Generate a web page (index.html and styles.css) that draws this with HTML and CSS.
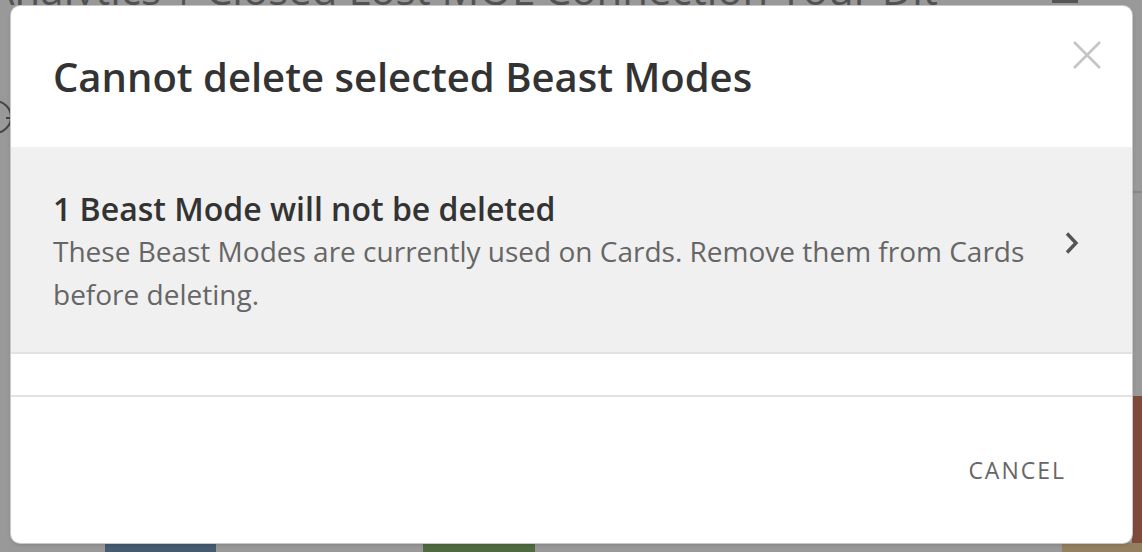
FILE: index.html
```html
<!DOCTYPE html>
<html lang="en">
<head>
    <meta charset="UTF-8">
    <meta name="viewport" content="width=device-width, initial-scale=1.0">
    <title>Beast Modes</title>
    <link rel="stylesheet" href="styles.css">
</head>
<body>
    <!-- Page behind the dialog -->
    <div class="page">
        <div class="page-title">Analytics | Closed Lost MQL Connection Your Dit</div>
        <div class="page-tool"></div>
        <div class="page-circle"><span></span></div>
        <div class="page-line"></div>
        <div class="bar bar-blue"></div>
        <div class="bar bar-green"></div>
        <div class="bar bar-brown"></div>
        <div class="bar bar-tan"></div>
    </div>

    <!-- Dialog -->
    <div class="modal">
        <header class="modal-header">
            <h1>Cannot delete selected Beast Modes</h1>
            <button class="close" aria-label="Close">
                <svg width="30" height="30" viewBox="0 0 30 30">
                    <path d="M2 2 L28 28 M28 2 L2 28" stroke="#c4c4c4" stroke-width="2.6" fill="none"/>
                </svg>
            </button>
        </header>
        <section class="warning">
            <div class="warning-text">
                <h2>1 Beast Mode will not be deleted</h2>
                <p>These Beast Modes are currently used on Cards. Remove them from Cards before deleting.</p>
            </div>
            <svg class="chevron" width="16" height="24" viewBox="0 0 16 24">
                <path d="M3 2.5 L12 12 L3 21.5" stroke="#555" stroke-width="3.4" fill="none"/>
            </svg>
        </section>
        <div class="spacer"></div>
        <footer class="modal-footer">
            <button class="cancel">Cancel</button>
        </footer>
    </div>
</body>
</html>
```

FILE: styles.css
```css
body {
    margin: 0;
    padding: 0;
    width: 1142px;
    height: 552px;
    overflow: hidden;
    background-color: #999999;
    font-family: "Open Sans", "Noto Sans", sans-serif;
    color: #333;
}

.page {
    position: relative;
    width: 1142px;
    height: 552px;
}

.page-title {
    position: absolute;
    left: -12px;
    top: -40px;
    font-size: 42px;
    line-height: 57px;
    color: #525252;
    white-space: nowrap;
}

.page-tool {
    position: absolute;
    left: 1052px;
    top: 0;
    width: 26px;
    height: 3px;
    background: #555;
}

.page-circle {
    position: absolute;
    left: -22px;
    top: 100px;
    width: 30px;
    height: 30px;
    border: 2px solid #444;
    border-radius: 50%;
}

.page-circle span {
    position: absolute;
    left: 26px;
    top: 15px;
    width: 8px;
    height: 2px;
    background: #444;
}

.page-line {
    position: absolute;
    left: 1132px;
    top: 191px;
    width: 10px;
    height: 2px;
    background: #888;
}

.bar {
    position: absolute;
}

.bar-blue {
    left: 105px;
    top: 540px;
    width: 111px;
    height: 12px;
    background: #465a70;
}

.bar-green {
    left: 423px;
    top: 540px;
    width: 112px;
    height: 12px;
    background: #4f6a40;
}

.bar-brown {
    left: 1132px;
    top: 396px;
    width: 10px;
    height: 156px;
    background: #804a3a;
}

.bar-tan {
    left: 1062px;
    top: 543px;
    width: 80px;
    height: 9px;
    background: #948060;
}

.modal {
    position: absolute;
    left: 11px;
    top: 6px;
    width: 1121px;
    height: 537px;
    background: #fff;
    border-radius: 9px;
    box-shadow: 0 0 0 1px #c8c8c8, 0 2px 4px rgba(0, 0, 0, 0.15);
    overflow: hidden;
    display: flex;
    flex-direction: column;
}

.modal-header {
    height: 141px;
    flex-shrink: 0;
    padding: 0 42px;
    display: flex;
    align-items: center;
    justify-content: space-between;
}

h1 {
    margin: 0;
    font-size: 40px;
    font-weight: 600;
    color: #333;
}

.close {
    background: none;
    border: none;
    padding: 0;
    margin-right: -12px;
    margin-top: -40px;
    cursor: pointer;
}

.warning {
    height: 207px;
    flex-shrink: 0;
    box-sizing: border-box;
    background: #f0f0f0;
    border-bottom: 2px solid #e2e2e2;
    padding: 41px 52px 0 42px;
    display: flex;
    align-items: flex-start;
    gap: 28px;
}

.warning-text {
    flex: 1;
}

h2 {
    margin: 0;
    font-size: 32px;
    font-weight: 600;
    line-height: 42px;
    color: #333;
}

.warning p {
    margin: 0;
    font-size: 28px;
    line-height: 43px;
    color: #666;
}

.chevron {
    margin-top: 43px;
}

.spacer {
    height: 41px;
    flex-shrink: 0;
    border-bottom: 2px solid #e2e2e2;
}

.modal-footer {
    flex: 1;
    display: flex;
    align-items: center;
    justify-content: flex-end;
    padding: 0 66px;
}

.cancel {
    background: none;
    border: none;
    padding: 0;
    font-family: "Open Sans", "Noto Sans", sans-serif;
    font-size: 23px;
    font-weight: 400;
    letter-spacing: 2px;
    text-transform: uppercase;
    color: #666;
    cursor: pointer;
}
```
